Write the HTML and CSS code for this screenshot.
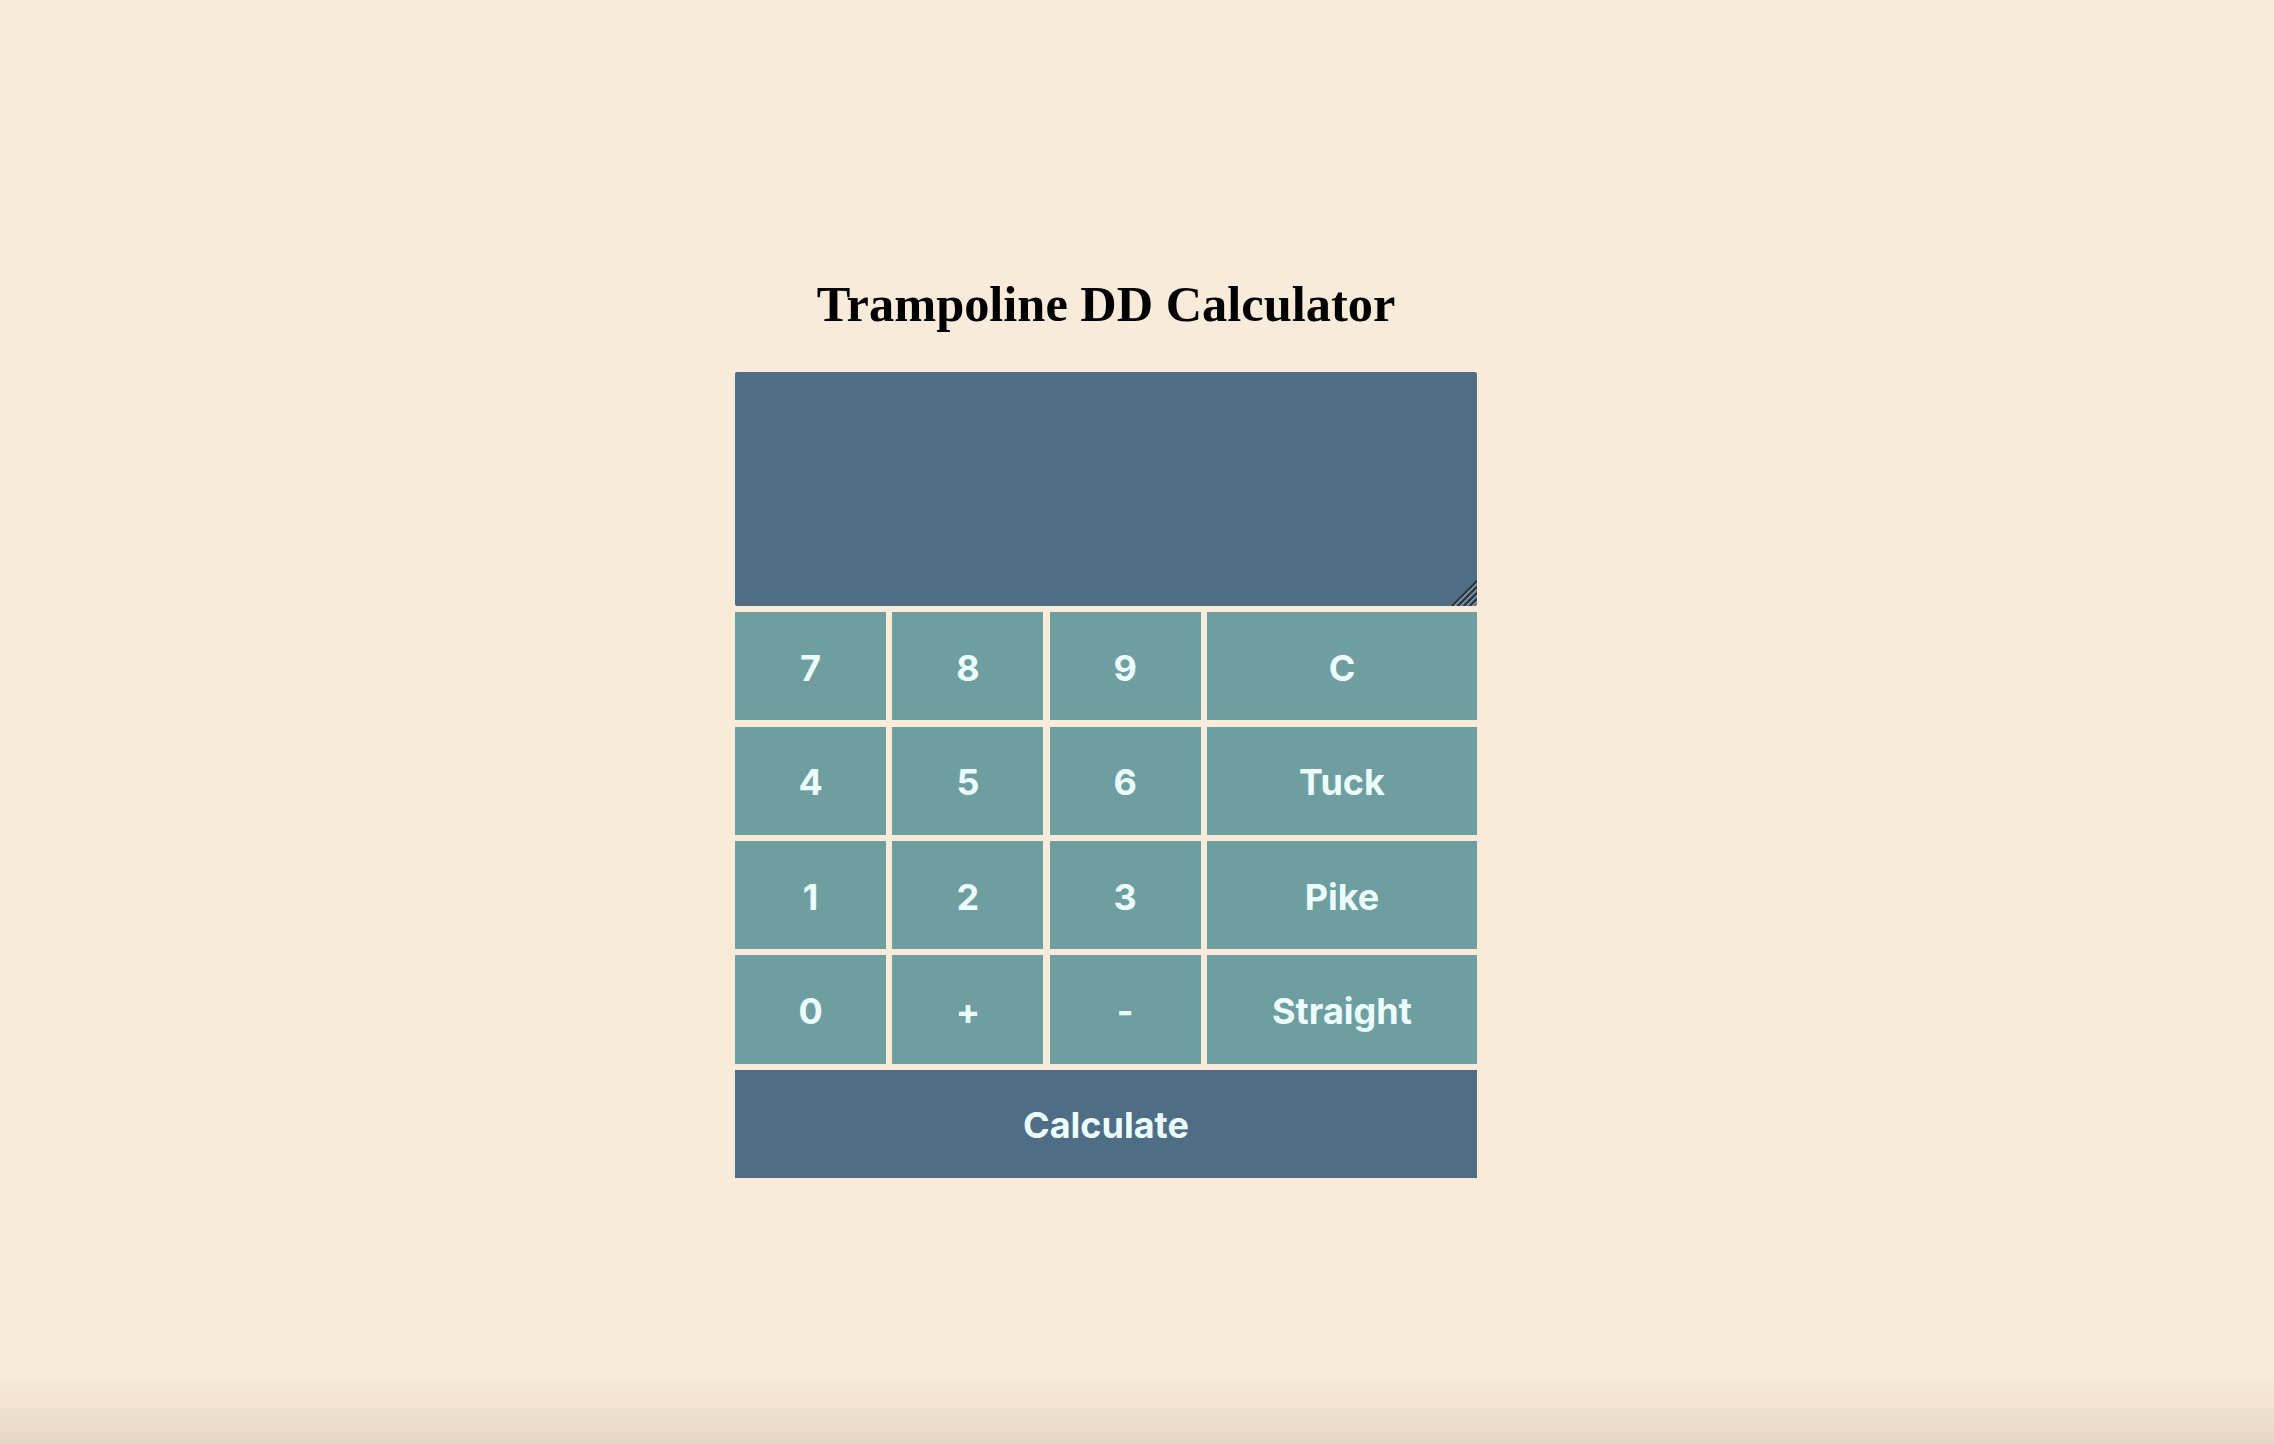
FILE: index.html
```html
<!DOCTYPE html>
<html lang="en">
<head>
<meta charset="utf-8">
<title>Trampoline DD Calculator</title>
<link rel="stylesheet" href="styles.css">
</head>
<body>
<main class="page">
  <h1 class="title">Trampoline DD Calculator</h1>
  <div class="calc">
    <div class="display-wrap">
      <textarea class="display"></textarea>
      <svg class="grip" width="28" height="28" viewBox="0 0 28 28" aria-hidden="true">
        <g stroke="#9aa9b5" stroke-width="1.3">
          <line x1="5" y1="28" x2="28" y2="5"/>
          <line x1="11" y1="28" x2="28" y2="11"/>
          <line x1="17" y1="28" x2="28" y2="17"/>
          <line x1="23" y1="28" x2="28" y2="23"/>
        </g>
        <g stroke="#27333f" stroke-width="2">
          <line x1="3" y1="28" x2="28" y2="3"/>
          <line x1="9" y1="28" x2="28" y2="9"/>
          <line x1="15" y1="28" x2="28" y2="15"/>
          <line x1="21" y1="28" x2="28" y2="21"/>
        </g>
      </svg>
    </div>
    <div class="keys">
      <button class="key">7</button>
      <button class="key">8</button>
      <button class="key">9</button>
      <button class="key">C</button>
      <button class="key">4</button>
      <button class="key">5</button>
      <button class="key">6</button>
      <button class="key">Tuck</button>
      <button class="key">1</button>
      <button class="key">2</button>
      <button class="key">3</button>
      <button class="key">Pike</button>
      <button class="key">0</button>
      <button class="key">+</button>
      <button class="key">-</button>
      <button class="key">Straight</button>
      <button class="key key-calc">Calculate</button>
    </div>
  </div>
</main>
<div class="bottom-shade"></div>
</body>
</html>
```
FILE: styles.css
```css
html, body {
  margin: 0;
  padding: 0;
  background: #f9ebda;
  height: 100%;
}
body {
  overflow: hidden;
}
.page {
  box-sizing: border-box;
  padding: 275px 62px 0 0;
  display: flex;
  flex-direction: column;
  align-items: center;
}
.title {
  margin: 0 0 39px;
  font-family: "Liberation Serif", "Times New Roman", serif;
  font-weight: 700;
  font-size: 50.4px;
  line-height: 58px;
  color: #000;
}
.calc {
  width: 742px;
  display: flex;
  flex-direction: column;
  gap: 6.2px;
}
.display-wrap {
  position: relative;
  width: 742px;
  height: 234px;
}
.display {
  display: block;
  box-sizing: border-box;
  width: 100%;
  height: 100%;
  margin: 0;
  border: none;
  border-radius: 2px;
  background: #4f6d85;
  color: #ecfeff;
  outline: none;
  resize: none;
}
.grip {
  position: absolute;
  right: 0;
  bottom: 0;
  width: 28px;
  height: 28px;
  overflow: hidden;
}
.keys {
  display: grid;
  grid-template-columns: 1fr 1fr 1fr 270px;
  grid-auto-rows: 108.2px;
  gap: 6.2px;
}
.key {
  margin: 0;
  padding: 3px 0 0;
  border: none;
  border-radius: 0;
  background: #6e9e9f;
  color: #ebfdff;
  font-family: Inter, "Noto Sans", sans-serif;
  font-weight: 700;
  font-size: 36px;
  cursor: pointer;
}
.key-calc {
  grid-column: 1 / -1;
  background: #4f6d85;
}
.bottom-shade {
  position: fixed;
  left: 0;
  right: 0;
  bottom: 0;
  height: 70px;
  background: linear-gradient(to bottom, rgba(60, 40, 20, 0), rgba(60, 40, 20, 0.1));
  pointer-events: none;
}
```
